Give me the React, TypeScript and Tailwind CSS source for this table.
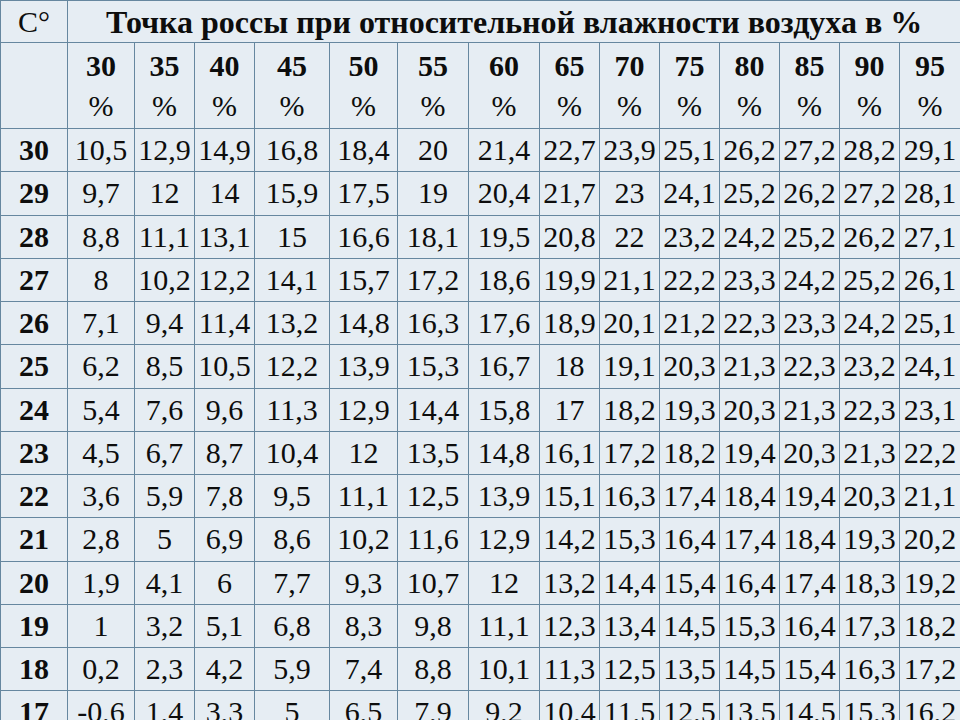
// Таблица точки росы
const WIDTHS = ['w-[67px]', 'w-[67px]', 'w-[60px]', 'w-[60px]', 'w-[75px]', 'w-[68px]', 'w-[71px]', 'w-[71px]', 'w-[60px]', 'w-[60px]', 'w-[60px]', 'w-[60px]', 'w-[60px]', 'w-[60px]', 'w-[61px]'];

const HUMIDITY = ['30', '35', '40', '45', '50', '55', '60', '65', '70', '75', '80', '85', '90', '95'];

const ROWS: [string, string[]][] = [
  ['30', ['10,5', '12,9', '14,9', '16,8', '18,4', '20', '21,4', '22,7', '23,9', '25,1', '26,2', '27,2', '28,2', '29,1']],
  ['29', ['9,7', '12', '14', '15,9', '17,5', '19', '20,4', '21,7', '23', '24,1', '25,2', '26,2', '27,2', '28,1']],
  ['28', ['8,8', '11,1', '13,1', '15', '16,6', '18,1', '19,5', '20,8', '22', '23,2', '24,2', '25,2', '26,2', '27,1']],
  ['27', ['8', '10,2', '12,2', '14,1', '15,7', '17,2', '18,6', '19,9', '21,1', '22,2', '23,3', '24,2', '25,2', '26,1']],
  ['26', ['7,1', '9,4', '11,4', '13,2', '14,8', '16,3', '17,6', '18,9', '20,1', '21,2', '22,3', '23,3', '24,2', '25,1']],
  ['25', ['6,2', '8,5', '10,5', '12,2', '13,9', '15,3', '16,7', '18', '19,1', '20,3', '21,3', '22,3', '23,2', '24,1']],
  ['24', ['5,4', '7,6', '9,6', '11,3', '12,9', '14,4', '15,8', '17', '18,2', '19,3', '20,3', '21,3', '22,3', '23,1']],
  ['23', ['4,5', '6,7', '8,7', '10,4', '12', '13,5', '14,8', '16,1', '17,2', '18,2', '19,4', '20,3', '21,3', '22,2']],
  ['22', ['3,6', '5,9', '7,8', '9,5', '11,1', '12,5', '13,9', '15,1', '16,3', '17,4', '18,4', '19,4', '20,3', '21,1']],
  ['21', ['2,8', '5', '6,9', '8,6', '10,2', '11,6', '12,9', '14,2', '15,3', '16,4', '17,4', '18,4', '19,3', '20,2']],
  ['20', ['1,9', '4,1', '6', '7,7', '9,3', '10,7', '12', '13,2', '14,4', '15,4', '16,4', '17,4', '18,3', '19,2']],
  ['19', ['1', '3,2', '5,1', '6,8', '8,3', '9,8', '11,1', '12,3', '13,4', '14,5', '15,3', '16,4', '17,3', '18,2']],
  ['18', ['0,2', '2,3', '4,2', '5,9', '7,4', '8,8', '10,1', '11,3', '12,5', '13,5', '14,5', '15,4', '16,3', '17,2']],
  ['17', ['-0,6', '1,4', '3,3', '5', '6,5', '7,9', '9,2', '10,4', '11,5', '12,5', '13,5', '14,5', '15,3', '16,2']],
];

export default function App() {
  return (
    <div className="w-[960px] h-[720px] overflow-hidden bg-[#e6edf3] text-[#0d0d0d] [font-family:'Liberation_Serif',serif]">
      <table className="table-fixed border-collapse w-[960px] text-[30px] leading-none">
        <colgroup>
          {WIDTHS.map((w, i) => (
            <col key={i} className={w} />
          ))}
        </colgroup>
        <thead>
          {/* заголовок */}
          <tr className="h-[42px]">
            <th className="border border-[#66879f] font-normal text-center align-middle">C°</th>
            <th colSpan={14} className="border border-[#66879f] font-bold text-center align-middle text-[32px] whitespace-nowrap">
              Точка россы при относительной влажности воздуха в %
            </th>
          </tr>
          <tr className="h-[86px]">
            <th className="border border-[#66879f]"></th>
            {HUMIDITY.map((h) => (
              <th key={h} className="border border-[#66879f] text-center align-middle">
                <div className="font-bold leading-[40px]">{h}</div>
                <div className="font-normal leading-[40px]">%</div>
              </th>
            ))}
          </tr>
        </thead>
        <tbody>
          {ROWS.map(([t, vals]) => (
            <tr key={t} className="h-[43.25px]">
              <td className="border border-[#66879f] text-center font-bold">{t}</td>
              {vals.map((v, i) => (
                <td key={i} className="border border-[#66879f] text-center whitespace-nowrap">
                  {v}
                </td>
              ))}
            </tr>
          ))}
        </tbody>
      </table>
    </div>
  );
}
